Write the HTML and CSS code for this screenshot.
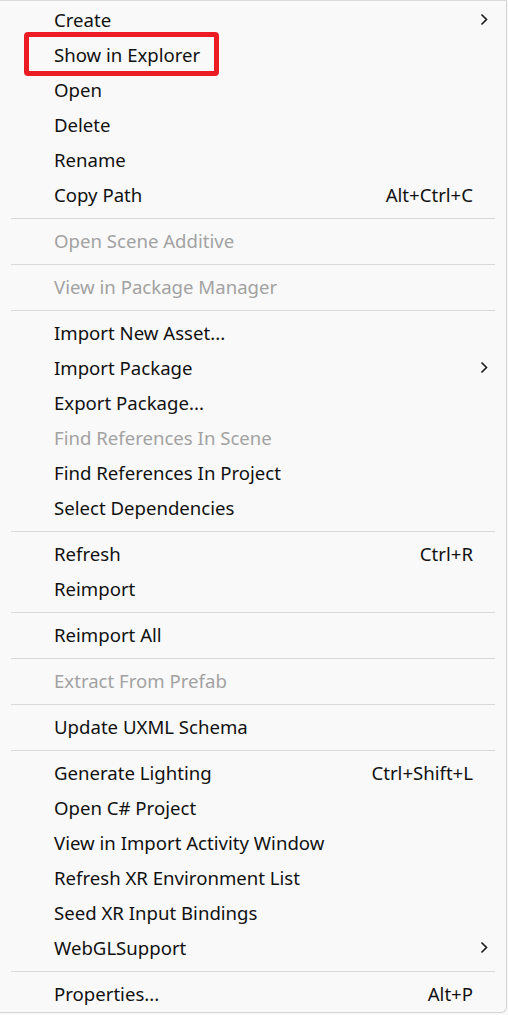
FILE: index.html
```html
<!DOCTYPE html>
<html>
<head>
<meta charset="utf-8">
<link rel="stylesheet" href="styles.css">
</head>
<body>
<div class="menu">
  <div class="item"><span class="label">Create</span><span class="key"></span><span class="sub"><svg width="8" height="13" viewBox="0 0 8 13"><path d="M1.5 1.5 L6.5 6.5 L1.5 11.5" fill="none" stroke="#1a1a1a" stroke-width="1.6"/></svg></span></div>
  <div class="item"><span class="label">Show in Explorer</span><span class="key"></span><span class="sub"></span></div>
  <div class="item"><span class="label">Open</span><span class="key"></span><span class="sub"></span></div>
  <div class="item"><span class="label">Delete</span><span class="key"></span><span class="sub"></span></div>
  <div class="item"><span class="label">Rename</span><span class="key"></span><span class="sub"></span></div>
  <div class="item"><span class="label">Copy Path</span><span class="key">Alt+Ctrl+C</span><span class="sub"></span></div>
  <div class="sep"></div>
  <div class="item disabled"><span class="label">Open Scene Additive</span><span class="key"></span><span class="sub"></span></div>
  <div class="sep"></div>
  <div class="item disabled"><span class="label">View in Package Manager</span><span class="key"></span><span class="sub"></span></div>
  <div class="sep"></div>
  <div class="item"><span class="label">Import New Asset...</span><span class="key"></span><span class="sub"></span></div>
  <div class="item"><span class="label">Import Package</span><span class="key"></span><span class="sub"><svg width="8" height="13" viewBox="0 0 8 13"><path d="M1.5 1.5 L6.5 6.5 L1.5 11.5" fill="none" stroke="#1a1a1a" stroke-width="1.6"/></svg></span></div>
  <div class="item"><span class="label">Export Package...</span><span class="key"></span><span class="sub"></span></div>
  <div class="item disabled"><span class="label">Find References In Scene</span><span class="key"></span><span class="sub"></span></div>
  <div class="item"><span class="label">Find References In Project</span><span class="key"></span><span class="sub"></span></div>
  <div class="item"><span class="label">Select Dependencies</span><span class="key"></span><span class="sub"></span></div>
  <div class="sep"></div>
  <div class="item"><span class="label">Refresh</span><span class="key">Ctrl+R</span><span class="sub"></span></div>
  <div class="item"><span class="label">Reimport</span><span class="key"></span><span class="sub"></span></div>
  <div class="sep"></div>
  <div class="item"><span class="label">Reimport All</span><span class="key"></span><span class="sub"></span></div>
  <div class="sep"></div>
  <div class="item disabled"><span class="label">Extract From Prefab</span><span class="key"></span><span class="sub"></span></div>
  <div class="sep"></div>
  <div class="item"><span class="label">Update UXML Schema</span><span class="key"></span><span class="sub"></span></div>
  <div class="sep"></div>
  <div class="item"><span class="label">Generate Lighting</span><span class="key">Ctrl+Shift+L</span><span class="sub"></span></div>
  <div class="item"><span class="label">Open C# Project</span><span class="key"></span><span class="sub"></span></div>
  <div class="item"><span class="label">View in Import Activity Window</span><span class="key"></span><span class="sub"></span></div>
  <div class="item"><span class="label">Refresh XR Environment List</span><span class="key"></span><span class="sub"></span></div>
  <div class="item"><span class="label">Seed XR Input Bindings</span><span class="key"></span><span class="sub"></span></div>
  <div class="item"><span class="label">WebGLSupport</span><span class="key"></span><span class="sub"><svg width="8" height="13" viewBox="0 0 8 13"><path d="M1.5 1.5 L6.5 6.5 L1.5 11.5" fill="none" stroke="#1a1a1a" stroke-width="1.6"/></svg></span></div>
  <div class="sep"></div>
  <div class="item"><span class="label">Properties...</span><span class="key">Alt+P</span><span class="sub"></span></div>
  <div class="highlight"></div>
</div>
</body>
</html>
```
FILE: styles.css
```css
html, body {
  margin: 0;
  padding: 0;
  background: #f9f9f9;
}
body {
  font-family: "Noto Sans", "Open Sans", sans-serif;
  font-size: 18.6px;
  color: #111111;
}
.menu {
  position: relative;
  width: 507px;
  height: 1013px;
  box-sizing: border-box;
  border-top: 1px solid #dcdcdc;
  border-right: 1px solid #d4d4d4;
  border-bottom: 1px solid #d4d4d4;
  border-bottom-right-radius: 6px;
  padding-top: 2px;
  background: #f9f9f9;
}
.item {
  display: grid;
  grid-template-columns: 1fr auto 33px;
  align-items: center;
  height: 35px;
  box-sizing: border-box;
  padding-left: 54px;
  padding-bottom: 2px;
}
.label, .key {
  white-space: nowrap;
}
.key {
  text-align: right;
}
.sub {
  display: flex;
  align-items: center;
  padding-left: 7px;
}
.sub svg {
  display: block;
}
.disabled {
  color: #a2a2a2;
}
.sep {
  height: 11px;
  margin: 0 11px 0 11px;
  display: flex;
  align-items: center;
}
.sep::before {
  content: "";
  display: block;
  width: 100%;
  height: 1px;
  background: #d9d9d9;
}
.highlight {
  position: absolute;
  left: 24px;
  top: 31px;
  width: 195px;
  height: 44px;
  box-sizing: border-box;
  border: 5px solid #ec1c24;
  border-radius: 4px;
}
```
